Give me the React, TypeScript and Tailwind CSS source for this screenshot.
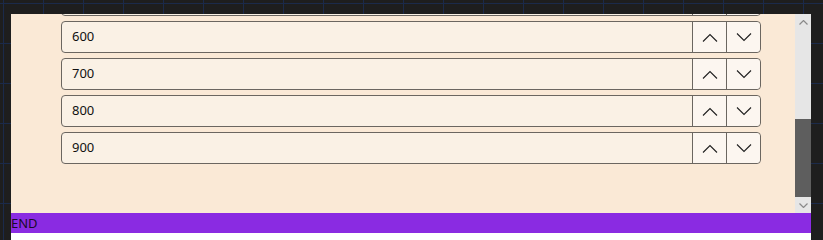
import { useEffect, useRef } from 'react';

const values = [0, 100, 200, 300, 400, 500, 600, 700, 800, 900];

function Chevron({ up }: { up?: boolean }) {
  return (
    <svg width="16" height="9" viewBox="0 0 16 9" fill="none">
      <path
        d={up ? 'M1 8.5L8 1.5L15 8.5' : 'M1 0.5L8 7.5L15 0.5'}
        stroke="#1f1f1f"
        strokeWidth="1.1"
      />
    </svg>
  );
}

function NumberRow({ value }: { value: number }) {
  return (
    <div className="flex h-8 w-[700px] items-stretch rounded-[4px] border border-[#6b6660] bg-[#faf1e5]">
      <div className="flex flex-1 items-center pl-[10px] text-[13px] text-[#111]">{value}</div>
      <button className="flex w-[34px] items-center justify-center border-l border-[#6b6660] bg-[#fcf6f0]">
        <Chevron up />
      </button>
      <button className="flex w-[34px] items-center justify-center rounded-r-[4px] border-l border-[#6b6660] bg-[#fcf6f0]">
        <Chevron />
      </button>
    </div>
  );
}

function ScrollArrow({ up }: { up?: boolean }) {
  return (
    <div className="flex h-4 items-center justify-center">
      <svg width="9" height="5" viewBox="0 0 9 5" fill="none">
        <path d={up ? 'M0.5 4.5L4.5 0.5L8.5 4.5' : 'M0.5 0.5L4.5 4.5L8.5 0.5'} stroke="#8a8a8a" strokeWidth="1.2" />
      </svg>
    </div>
  );
}

export default function App() {
  const listRef = useRef<HTMLDivElement>(null);

  useEffect(() => {
    if (listRef.current) listRef.current.scrollTop = listRef.current.scrollHeight;
  }, []);

  return (
    <div
      className="h-[240px] w-[823px] overflow-hidden bg-[#1e1e1e] pt-[14px] pl-[11px] [font-family:'Noto_Sans',sans-serif]"
      style={{
        backgroundImage:
          'linear-gradient(to right, #1b2a4a 1px, transparent 1px), linear-gradient(to bottom, #1b2a4a 1px, transparent 1px)',
        backgroundSize: '40px 40px',
        backgroundPosition: '3px 3px',
      }}
    >
      <div className="flex w-[800px] flex-col">
        <div className="flex h-[199px] bg-[#fae9d6]">
          <div ref={listRef} className="flex-1 overflow-hidden">
            <div className="flex flex-col gap-[5px] pt-3 pb-[49px] pl-[50px]">
              {values.map((v) => (
                <NumberRow key={v} value={v} />
              ))}
            </div>
          </div>
          <div className="flex w-4 flex-col bg-[#e6e6e6]">
            <ScrollArrow up />
            <div className="flex flex-1 flex-col justify-end">
              <div className="h-[78px] bg-[#5e5e5e]" />
            </div>
            <ScrollArrow />
          </div>
        </div>
        <div className="h-5 bg-[#8a2be2] text-[13px] leading-5 text-[#1a0a2a]">END</div>
        <div className="h-[7px] bg-white" />
      </div>
    </div>
  );
}
